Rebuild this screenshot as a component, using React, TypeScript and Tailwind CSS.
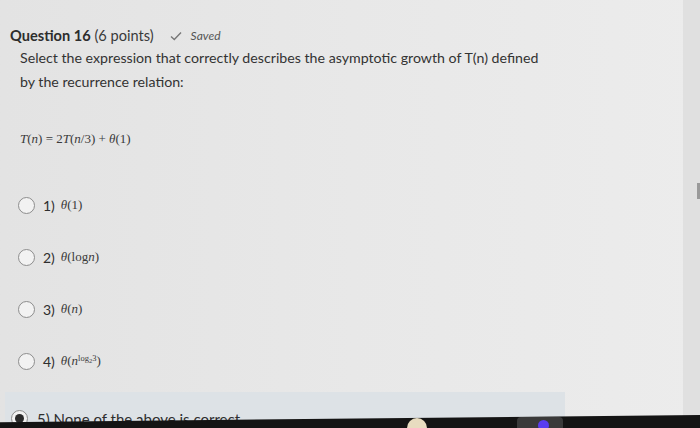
import React from "react";

const lato = { fontFamily: "Lato, 'Open Sans', sans-serif" };

function Radio({ selected = false }: { selected?: boolean }) {
  return (
    <span className="flex h-[17px] w-[17px] shrink-0 items-center justify-center rounded-full border-[1.5px] border-[#8d8d8d] bg-[#f2f2f2]">
      {selected && <span className="h-[9px] w-[9px] rounded-full bg-[#2a2a2a]" />}
    </span>
  );
}

function Math({ children }: { children: React.ReactNode }) {
  return (
    <span className="text-[13px] text-[#3a3a3a]" style={{ fontFamily: "'Liberation Serif', 'DejaVu Serif', serif" }}>
      {children}
    </span>
  );
}

function Option({ n, children }: { n: string; children: React.ReactNode }) {
  return (
    <div className="flex h-[52px] items-center pl-[18px]">
      <Radio />
      <span className="ml-[8px] mr-[6px] text-[14px] text-[#2e2e2e]">{n}</span>
      <Math>{children}</Math>
    </div>
  );
}

export default function App() {
  return (
    <div
      className="relative h-[428px] w-[700px] overflow-hidden bg-gradient-to-r from-[#e3e3e3] via-[#e8e8e8] to-[#ececec] text-[#2d2d2d]"
      style={lato}
    >
      <div className="flex h-[428px] flex-col">
        <div className="flex items-baseline pl-[10px] pt-[26px]">
          <span className="text-[14.6px] leading-[20px]">
            <span className="font-bold">Question 16</span>{" "}
            <span className="text-[#3a3a3a]">(6 points)</span>
          </span>
          <span className="ml-[16px] flex items-center gap-[9px] text-[12px] italic text-[#555]">
            <svg width="12" height="10" viewBox="0 0 12 10" className="self-center">
              <path d="M1 5.5 L4.3 8.5 L11 1.5" fill="none" stroke="#777" strokeWidth="1.4" />
            </svg>
            Saved
          </span>
        </div>
        <p className="w-[556px] pl-[20px] text-[14.2px] leading-[24px] text-[#333]">
          Select the expression that correctly describes the asymptotic growth of T(n) defined by the recurrence relation:
        </p>
        <div className="mt-[31px] pl-[20px]">
          <span className="text-[13px] text-[#3a3a3a]" style={{ fontFamily: "'Liberation Serif', 'DejaVu Serif', serif" }}>
            <i>T</i>(<i>n</i>) = 2<i>T</i>(<i>n</i>/3) + <i>θ</i>(1)
          </span>
        </div>
        <div className="mt-[30px] flex flex-col">
          <Option n="1)">
            <i>θ</i>(1)
          </Option>
          <Option n="2)">
            <i>θ</i>(log<i>n</i>)
          </Option>
          <Option n="3)">
            <i>θ</i>(<i>n</i>)
          </Option>
          <Option n="4)">
            <i>θ</i>(<i>n</i>
            <sup className="text-[8.5px]">
              log<sub className="text-[6.5px]">2</sub>3
            </sup>
            )
          </Option>
        </div>
        <div className="ml-[5px] mt-[5px] flex h-[40px] w-[560px] items-start bg-[#dde2e6] pl-[6px] pt-[18px]">
          <Radio selected />
          <span className="ml-[9px] text-[15px] leading-[18px] text-[#2e2e2e]">5) None of the above is correct</span>
        </div>
      </div>
      <div className="absolute right-0 top-0 h-[428px] w-[17px] bg-[#e0e0e0]" />
      <div className="absolute right-0 top-[183px] h-[16px] w-[3px] bg-[#9a9a9a]" />
      <div className="absolute bottom-0 left-0 h-[13px] w-[700px] bg-[#141414] [clip-path:polygon(0_55%,100%_0,100%_100%,0_100%)]" />
      <span className="absolute left-[407px] top-[418px] h-[12px] w-[20px] rounded-t-full bg-[#e8dcc0]" />
      <span className="absolute left-[517px] top-[417px] h-[12px] w-[46px] rounded-t-[4px] bg-[#3a3a3a]" />
      <span className="absolute left-[538px] top-[420px] h-[11px] w-[11px] rounded-full bg-[#5a3cf0]" />
    </div>
  );
}
